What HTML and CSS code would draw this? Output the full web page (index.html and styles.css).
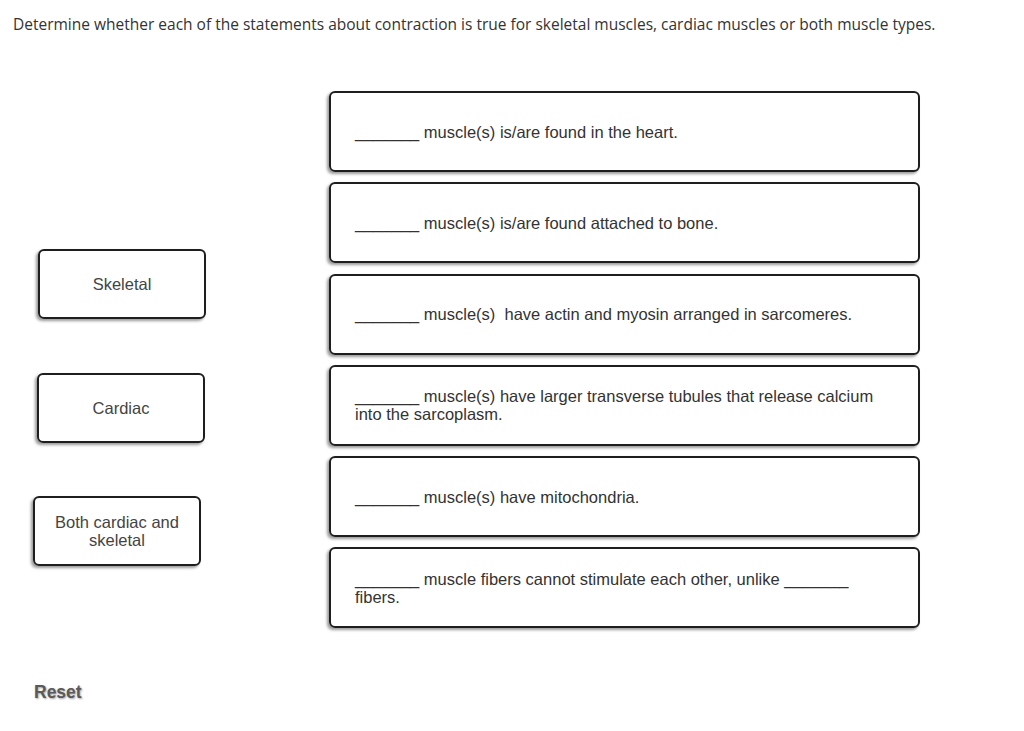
FILE: index.html
```html
<!DOCTYPE html>
<html lang="en">

<head>
    <meta charset="UTF-8">
    <meta name="viewport" content="width=device-width, initial-scale=1.0">
    <title>Muscle Contraction</title>
    <link rel="stylesheet" href="styles.css">
</head>

<body>

    <p class="prompt">Determine whether each of the statements about contraction is true for skeletal muscles, cardiac muscles or both muscle types.</p>

    <div class="board">
        <!-- Answer choices -->
        <div class="choices">
            <div class="choice choice-skeletal">Skeletal</div>
            <div class="choice choice-cardiac">Cardiac</div>
            <div class="choice choice-both">Both cardiac and<br>skeletal</div>
        </div>

        <!-- Drop targets -->
        <div class="targets">
            <div class="target"><p>_______ muscle(s) is/are found in the heart.</p></div>
            <div class="target"><p>_______ muscle(s) is/are found attached to bone.</p></div>
            <div class="target"><p>_______ muscle(s)&nbsp; have actin and myosin arranged in sarcomeres.</p></div>
            <div class="target"><p>_______ muscle(s) have larger transverse tubules that release calcium into the sarcoplasm.</p></div>
            <div class="target"><p>_______ muscle(s) have mitochondria.</p></div>
            <div class="target"><p>_______ muscle fibers cannot stimulate each other, unlike _______ fibers.</p></div>
        </div>
    </div>

    <div class="footer">
        <button type="button" class="reset">Reset</button>
    </div>

</body>

</html>
```

FILE: styles.css
```css
body {
    font-family: "Liberation Sans", Arial, sans-serif;
    background-color: #fff;
    color: #333;
    margin: 0;
    padding: 0;
}

.prompt {
    font-family: "Open Sans", Lato, sans-serif;
    font-size: 15.5px;
    line-height: 18px;
    color: #333;
    margin: 0;
    padding: 15px 13px 0;
}

.board {
    display: flex;
    margin-top: 58px;
}

.choices {
    width: 329px;
    display: flex;
    flex-direction: column;
    gap: 53.5px;
    padding-top: 158px;
}

.choice {
    height: 66px;
    width: 164px;
    display: flex;
    align-items: center;
    justify-content: center;
    text-align: center;
    font-size: 16.5px;
    line-height: 18px;
    color: #444;
    border: 2px solid #1e1e1e;
    border-radius: 6px;
    box-shadow: -2px 2px 3px rgba(0, 0, 0, 0.4);
}

.choice-skeletal {
    margin-left: 38px;
}

.choice-cardiac {
    margin-left: 37px;
}

.choice-both {
    margin-left: 33px;
}

.targets {
    width: 591px;
    display: flex;
    flex-direction: column;
    gap: 10.25px;
}

.target {
    height: 77px;
    display: flex;
    align-items: center;
    padding: 0 24px;
    border: 2px solid #1e1e1e;
    border-radius: 6px;
    box-shadow: -2px 2px 3px rgba(0, 0, 0, 0.4);
}

.target p {
    margin: 0;
    font-size: 16.5px;
    line-height: 18px;
    color: #333;
}

.footer {
    padding: 54px 0 0 34px;
}

.reset {
    font-family: "Liberation Sans", Arial, sans-serif;
    font-size: 17.5px;
    font-weight: bold;
    color: #5a5a5a;
    background: none;
    border: none;
    padding: 0;
    text-shadow: 1px 1px 2px rgba(0, 0, 0, 0.35);
    cursor: pointer;
}
```
